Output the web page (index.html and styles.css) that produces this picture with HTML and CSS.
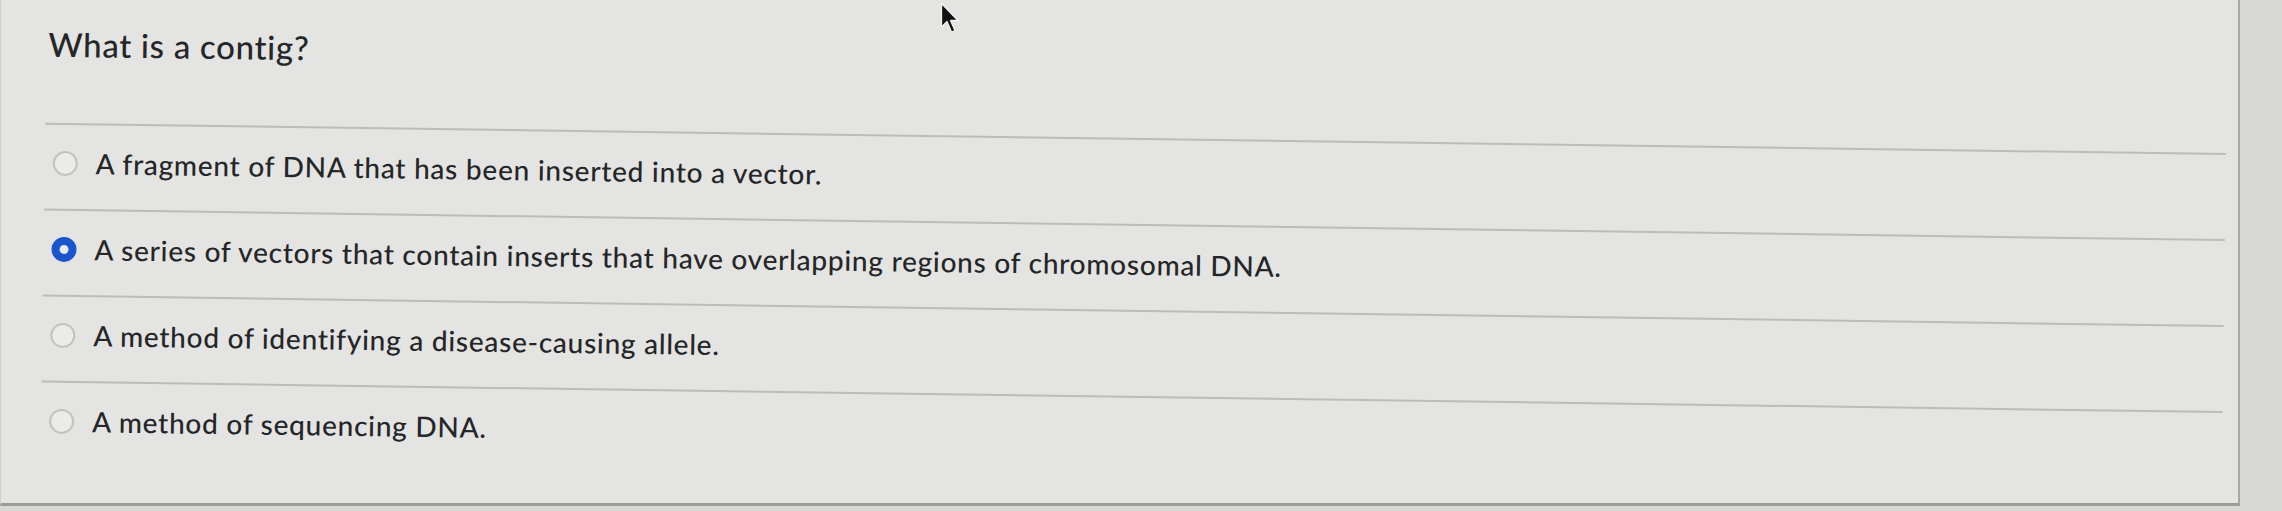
FILE: index.html
```html
<!DOCTYPE html>
<html lang="en">
<head>
<meta charset="utf-8">
<title>What is a contig?</title>
<link rel="stylesheet" href="styles.css">
</head>
<body>
<div class="frame">
  <div class="quiz">
    <div class="question-text">What is a contig?</div>
    <div class="answers">
      <label class="answer"><span class="radio"></span><span class="answer-text">A fragment of DNA that has been inserted into a vector.</span></label>
      <label class="answer"><span class="radio checked"></span><span class="answer-text">A series of vectors that contain inserts that have overlapping regions of chromosomal DNA.</span></label>
      <label class="answer"><span class="radio"></span><span class="answer-text">A method of identifying a disease-causing allele.</span></label>
      <label class="answer"><span class="radio"></span><span class="answer-text">A method of sequencing DNA.</span></label>
    </div>
  </div>
  <svg class="cursor" width="22" height="34" viewBox="0 0 22 34"><path d="M1.5 1.5 L1.5 25 L7 19.5 L11.5 30 L15 28.5 L10.5 18.5 L18 18.5 Z" fill="#111" stroke="#f2f2f2" stroke-width="1.3" stroke-linejoin="round"/></svg>
</div>
</body>
</html>
```
FILE: styles.css
```css
html, body {
  margin: 0;
  padding: 0;
}
body {
  background: #d8d8d6;
  width: 2282px;
  height: 511px;
  overflow: hidden;
  font-family: Lato, "Open Sans", sans-serif;
}
.frame {
  position: relative;
  width: 2240px;
  height: 506px;
  background: #e4e4e2;
  border-left: 1px solid #cfcfcd;
  border-right: 2px solid #a8a8a6;
  border-bottom: 3px solid #9c9c9a;
  box-sizing: border-box;
  overflow: hidden;
}
.quiz {
  transform: rotate(0.8deg);
  transform-origin: 0 0;
  padding-top: 23px;
}
.question-text {
  margin-left: 48px;
  font-size: 33px;
  font-weight: 500;
  letter-spacing: 0.7px;
  line-height: 40px;
  color: #252628;
  height: 99px;
}
.answers {
  margin-left: 46px;
  width: 2181px;
  display: flex;
  flex-direction: column;
}
.answer {
  display: flex;
  align-items: center;
  height: 86px;
  padding-bottom: 8px;
  border-top: 2px solid #bcbcba;
  box-sizing: border-box;
}
.radio {
  width: 25px;
  height: 25px;
  margin-left: 8px;
  margin-right: 18px;
  border-radius: 50%;
  border: 2px solid #c2c2c0;
  background: #ebebe9;
  box-sizing: border-box;
  flex: none;
}
.radio.checked {
  border: 8px solid #1a55cc;
  background: #e6ebf3;
}
.answer-text {
  font-size: 28px;
  font-weight: 500;
  letter-spacing: 0.75px;
  color: #252628;
  line-height: 32px;
}
.cursor {
  position: absolute;
  left: 939px;
  top: 2px;
}
```
